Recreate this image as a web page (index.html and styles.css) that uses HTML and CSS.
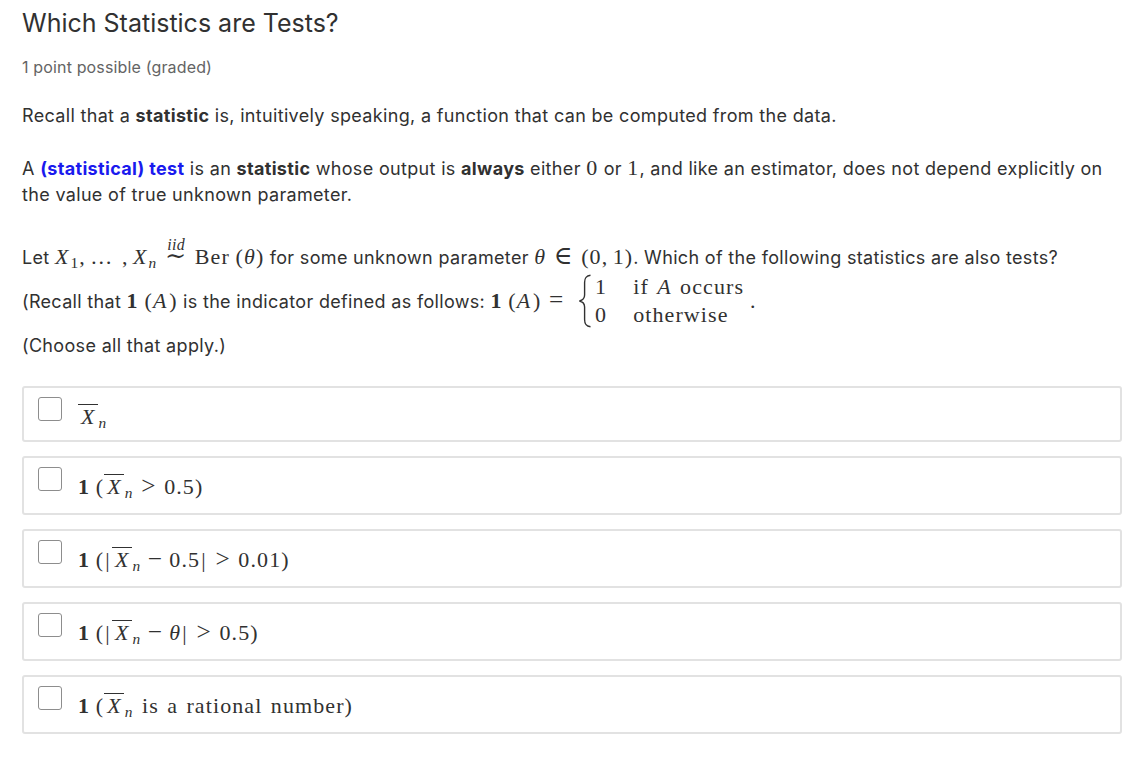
FILE: index.html
```html
<!DOCTYPE html>
<html lang="en">
<head>
<meta charset="utf-8">
<title>Which Statistics are Tests?</title>
<link rel="stylesheet" href="styles.css">
</head>
<body>
<div class="page">
  <h2 class="title">Which Statistics are Tests?</h2>
  <div class="meta">1 point possible (graded)</div>

  <p class="text p1">Recall that a <b>statistic</b> is, intuitively speaking, a function that can be computed from the data.</p>

  <p class="text p2">A <b class="link">(statistical) test</b> is an <b>statistic</b> whose output is <b>always</b> either <span class="m">0</span> or <span class="m">1</span>, and like an estimator, does not depend explicitly on the value of true unknown parameter.</p>

  <p class="text p3">Let <span class="m"><i>X</i><sub>1</sub><span class="pn">,</span><span class="dots">…</span><span class="pn">,</span><i>X</i><sub><i>n</i></sub><span class="rel stack"><i class="iid">iid</i>∼</span>Ber<span class="fn-gap"></span>(<i>θ</i>)</span> for some unknown parameter <span class="m"><i>θ</i><span class="rel">∈</span>(0<span class="pn">,</span>1)</span>. Which of the following statistics are also tests?</p>

  <p class="text p4">(Recall that <span class="m"><b>1</b><span class="fn-gap"></span>(<i class="x">A</i>)</span> is the indicator defined as follows: <span class="m"><b>1</b><span class="fn-gap"></span>(<i class="x">A</i>)<span class="rel">=</span><span class="cases"><svg class="brace" viewBox="0 0 14 54" width="14" height="54" aria-hidden="true"><path d="M12.5 1.2 C7.6 1.9 6.6 4.4 6.6 8.5 L6.6 21 C6.6 24.3 5 26.2 1.4 27 C5 27.8 6.6 29.7 6.6 33 L6.6 45.5 C6.6 49.6 7.6 52.1 12.5 52.8" fill="none" stroke="#313131" stroke-width="1.4"/></svg><span class="cases-grid"><span>1</span><span>if <i>A</i> occurs</span><span>0</span><span>otherwise</span></span></span><span class="period">.</span></span></p>

  <p class="text p5">(Choose all that apply.)</p>

  <div class="options">
    <label class="option option--short"><span class="cb"></span><span class="m opt"><span class="bar"><i>X</i></span><sub><i>n</i></sub></span></label>
    <label class="option"><span class="cb"></span><span class="m opt"><b>1</b><span class="fn-gap"></span>(<span class="bar"><i>X</i></span><sub><i>n</i></sub><span class="rel">&gt;</span>0.5)</span></label>
    <label class="option"><span class="cb"></span><span class="m opt"><b>1</b><span class="fn-gap"></span>(<span class="vb">|</span><span class="bar"><i>X</i></span><sub><i>n</i></sub><span class="bin">−</span>0.5<span class="vb">|</span><span class="rel">&gt;</span>0.01)</span></label>
    <label class="option"><span class="cb"></span><span class="m opt"><b>1</b><span class="fn-gap"></span>(<span class="vb">|</span><span class="bar"><i>X</i></span><sub><i>n</i></sub><span class="bin">−</span><i>θ</i><span class="vb">|</span><span class="rel">&gt;</span>0.5)</span></label>
    <label class="option"><span class="cb"></span><span class="m opt"><b>1</b><span class="fn-gap"></span>(<span class="bar"><i>X</i></span><sub><i>n</i></sub> is a rational number)</span></label>
  </div>
</div>
</body>
</html>
```

FILE: styles.css
```css
* { box-sizing: border-box; }

body {
  margin: 0;
  background: #ffffff;
  color: #313131;
  font-family: Inter, "Noto Sans", sans-serif;
}

.page {
  width: 1144px;
  padding: 8px 22px 0 22px;
}

.title {
  margin: 0;
  font-size: 25px;
  font-weight: 400;
  line-height: 30px;
}

.meta {
  margin-top: 19px;
  font-size: 16px;
  line-height: 20px;
  letter-spacing: 0.15px;
  color: #646464;
}

.text {
  margin: 0;
  font-size: 18px;
  line-height: 26px;
  letter-spacing: 0.33px;
}

.text b { font-weight: 700; }

.link { color: #1a1aee; }

.p1 { margin-top: 26px; }
.p2 { margin-top: 26px; }
.p3 { margin-top: 35px; }
.p4 { margin-top: 2px; }
.p5 { margin-top: 0; }

.m {
  font-family: "Liberation Serif", "DejaVu Serif", serif;
  font-size: 22px;
  letter-spacing: 0.05em;
  word-spacing: 0.08em;
}

.m b { font-weight: 700; }

.m i.x { margin-right: 0.08em; }

.m sub {
  font-size: 0.7em;
  vertical-align: -0.25em;
  line-height: 0;
  margin-left: 1px;
}

.pn { margin-right: 0.2em; }
.dots { margin-right: 0.2em; letter-spacing: 0.24em; }
.fn-gap { display: inline-block; width: 0.26em; }
.vb { margin: 0 0.05em; }

.rel, .bin {
  font-size: 1.15em;
  line-height: 0;
}
.rel { margin: 0 0.3em; }
.bin { margin: 0 0.25em; }

.m .stack {
  position: relative;
  display: inline-block;
  line-height: 1;
}

.stack .iid {
  position: absolute;
  left: 50%;
  bottom: 0.95em;
  transform: translateX(-50%);
  font-size: 0.63em;
  line-height: 1;
  letter-spacing: 0.02em;
}

.cases {
  display: inline-flex;
  align-items: center;
  vertical-align: middle;
  margin-left: 6px;
  margin-bottom: 4px;
  line-height: 28px;
}

.brace { display: block; margin-right: 3px; }

.cases-grid {
  display: grid;
  grid-template-columns: auto auto;
  column-gap: 26px;
}

.period { margin-left: 6px; }

.options {
  margin-top: 27px;
  width: 1100px;
  display: flex;
  flex-direction: column;
  gap: 14px;
}

.option {
  display: flex;
  align-items: flex-start;
  gap: 16px;
  height: 59px;
  padding: 9px 14px;
  border: 2px solid #e2e2e2;
  border-radius: 3px;
}

.option--short { height: 56px; }

.cb {
  flex: none;
  width: 24px;
  height: 24px;
  border: 1.5px solid #8d8d8d;
  border-radius: 3px;
  background: #fff;
}

.opt {
  line-height: 40px;
}

.option--short .opt { line-height: 40px; }

.bar {
  display: inline-block;
  border-top: 1.2px solid #313131;
  line-height: 1;
  padding-top: 1px;
  padding-left: 3px;
  padding-right: 2px;
}
```
